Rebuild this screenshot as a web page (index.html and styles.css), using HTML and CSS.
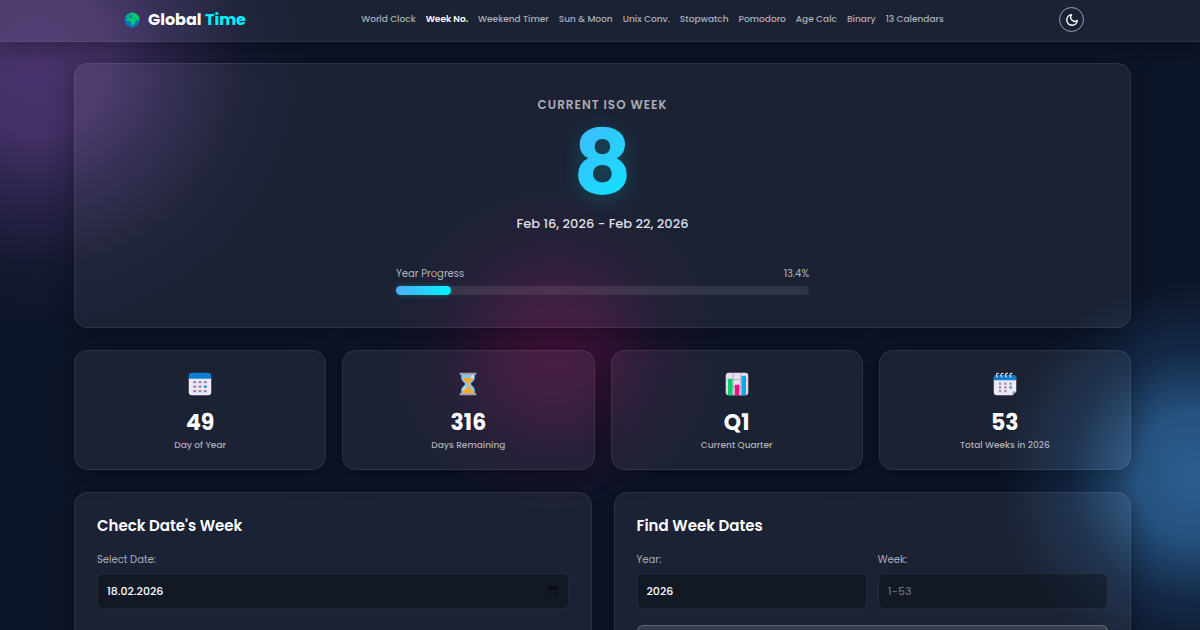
FILE: index.html
```html
<!DOCTYPE html>
<html lang="en">
<head>
<meta charset="utf-8">
<meta name="viewport" content="width=device-width, initial-scale=1">
<title>Week No. – Global Time</title>
<link rel="stylesheet" href="styles.css">
</head>
<body>
<header class="site-header">
  <a class="logo" href="#">
    <svg class="logo-icon" viewBox="0 0 32 32" aria-hidden="true">
      <circle cx="16" cy="16" r="15" fill="#0a74c2"/>
      <path fill="#08c96b" d="M9 4c4-3 10-3 14-1 5 2 7 6 8 11l-1 5-3-4-2 1-2-3-4-1-3 1-1-3 2-3zM3 10l3-4 5-1 1 3-2 2-5 1zM6 13l6-2 5 2 5 0 3 4-3 3-1 4-4 4-2-2-1-6-2-2-5 0-3-3z"/>
    </svg>
    <span>Global <span class="logo-accent">Time</span></span>
  </a>
  <nav class="nav" aria-label="Tools">
    <a href="#">World Clock</a>
    <a href="#" class="active" aria-current="page">Week No.</a>
    <a href="#">Weekend Timer</a>
    <a href="#">Sun &amp; Moon</a>
    <a href="#">Unix Conv.</a>
    <a href="#">Stopwatch</a>
    <a href="#">Pomodoro</a>
    <a href="#">Age Calc</a>
    <a href="#">Binary</a>
    <a href="#">13 Calendars</a>
  </nav>
  <button class="theme-toggle" type="button" aria-label="Toggle theme">
    <svg viewBox="0 0 24 24" fill="none" stroke="currentColor" stroke-width="2.4" stroke-linecap="round" stroke-linejoin="round" aria-hidden="true"><path d="M21 12.8A9 9 0 1 1 11.2 3 7 7 0 0 0 21 12.8z"/></svg>
  </button>
</header>

<main class="container">
  <section class="glass hero">
    <h1 class="hero-label">Current ISO Week</h1>
    <div class="week-number">8</div>
    <p class="week-range">Feb 16, 2026 - Feb 22, 2026</p>
    <div class="year-progress">
      <div class="progress-head"><span>Year Progress</span><span>13.4%</span></div>
      <div class="progress-track"><div class="progress-fill" style="width:13.4%"></div></div>
    </div>
  </section>

  <section class="stats">
    <article class="glass stat">
      <svg class="stat-icon" viewBox="0 0 32 32" aria-hidden="true">
        <path fill="#efe9f7" d="M1 8h30v19a4 4 0 0 1-4 4H5a4 4 0 0 1-4-4z"/>
        <path fill="#0a7fcd" d="M5 1h22a4 4 0 0 1 4 4v4H1V5a4 4 0 0 1 4-4z"/>
        <path fill="#978ba6" d="M7 12h4v3H7zM14 12h4v3h-4zM21 12h4v3h-4zM7 18h4v3H7zM14 18h4v3h-4zM7 24h4v3H7zM14 24h4v3h-4zM21 24h4v3h-4z"/>
        <path fill="#0a8ee0" d="M21 18h4v3h-4z"/>
      </svg>
      <div class="stat-value">49</div>
      <div class="stat-label">Day of Year</div>
    </article>
    <article class="glass stat">
      <svg class="stat-icon" viewBox="0 0 32 32" aria-hidden="true">
        <path fill="#83c8fa" d="M7 3h18v5c0 4-5 6-5 8s5 4 5 8v5H7v-5c0-4 5-6 5-8s-5-4-5-8z"/>
        <path fill="#c7e8ff" d="M20 4h4v4l-4 4zM9 23l4-4v3l-3 4z"/>
        <path fill="#ffaa2b" d="M9 8h14c-1 4-5 5-6 8v5c3 1 6 3 7 7H8c1-4 4-6 7-7v-5c-1-3-5-4-6-8z"/>
        <path fill="#a2a3aa" d="M5 1h22v3H5zM5 28h22v3H5z"/>
      </svg>
      <div class="stat-value">316</div>
      <div class="stat-label">Days Remaining</div>
    </article>
    <article class="glass stat">
      <svg class="stat-icon" viewBox="0 0 32 32" aria-hidden="true">
        <rect x="1" y="1" width="30" height="30" rx="4" fill="#eadff2"/>
        <path stroke="#bcaecb" stroke-width="1.4" d="M11 1v30M21 1v30M1 10h30M1 20h30"/>
        <path fill="#08cb6d" d="M4 9h6v22H5l-1-1z"/><path fill="#f40c83" d="M13 17h6v14h-6z"/><path fill="#12a5ed" d="M22 5h6v26h-6z"/>
      </svg>
      <div class="stat-value">Q1</div>
      <div class="stat-label">Current Quarter</div>
    </article>
    <article class="glass stat">
      <svg class="stat-icon" viewBox="0 0 32 32" aria-hidden="true">
        <path fill="#efe9f7" d="M1 9h30v17l-5 5H5a4 4 0 0 1-4-4z"/>
        <path fill="#aaa0b6" d="M26 31v-5h5z"/>
        <path fill="#0a7fcd" d="M4 4h24a3 3 0 0 1 3 3v4H1V7a3 3 0 0 1 3-3z"/>
        <g fill="none" stroke="#ddd7e7" stroke-width="1.7"><path d="M6 7c-3-3-1-6 2-5M12 7c-3-3-1-6 2-5M18 7c-3-3-1-6 2-5M24 7c-3-3-1-6 2-5"/></g>
        <path fill="#978ba6" d="M8 14h3v3H8zM15 14h3v3h-3zM22 14h3v3h-3zM8 19h3v3H8zM15 19h3v3h-3zM8 24h3v3H8zM15 24h3v3h-3z"/>
        <path fill="#0a8ee0" d="M22 19h3v3h-3z"/>
      </svg>
      <div class="stat-value">53</div>
      <div class="stat-label">Total Weeks in 2026</div>
    </article>
  </section>

  <section class="tools">
    <form class="glass tool">
      <h2>Check Date's Week</h2>
      <div class="field">
        <label for="date">Select Date:</label>
        <div class="date-box">
          <input id="date" type="text" value="18.02.2026">
          <button class="date-button" type="button" aria-label="Open calendar">
            <svg viewBox="0 0 12 12" aria-hidden="true"><path fill="#07090d" fill-rule="evenodd" d="M2 1h1V0h1v1h4V0h1v1h1a1 1 0 0 1 1 1v8a1 1 0 0 1-1 1H2a1 1 0 0 1-1-1V2a1 1 0 0 1 1-1zm0 3v6h8V4z"/></svg>
          </button>
        </div>
      </div>
    </form>
    <form class="glass tool">
      <h2>Find Week Dates</h2>
      <div class="field-row">
        <div class="field">
          <label for="year">Year:</label>
          <input id="year" type="text" inputmode="numeric" value="2026">
        </div>
        <div class="field">
          <label for="week">Week:</label>
          <input id="week" type="text" inputmode="numeric" placeholder="1-53">
        </div>
      </div>
      <button class="submit" type="button" aria-label="Find dates"></button>
    </form>
  </section>
</main>
</body>
</html>
```
FILE: styles.css
```css
* { box-sizing: border-box; }

html { scrollbar-width: none; }

body {
  margin: 0;
  min-height: 100vh;
  color: #fff;
  font-family: Poppins, Inter, "Open Sans", sans-serif;
  background:
    radial-gradient(circle at 35px 60px, rgb(119 75 162 / 56%) 0, rgb(115 73 158 / 52%) 75px, rgb(105 68 148 / 30%) 140px, rgb(100 65 145 / 9%) 205px, transparent 270px),
    radial-gradient(circle at 555px 350px, rgb(150 10 85 / 36%) 0, rgb(150 10 85 / 29%) 45px, rgb(150 10 85 / 10%) 105px, transparent 165px),
    radial-gradient(circle at calc(100% - 5px) 475px, rgb(64 145 215 / 58%) 0, rgb(60 140 210 / 52%) 60px, rgb(50 125 200 / 19%) 125px, transparent 195px);
  background-color: #0d1528;
}

a { color: inherit; text-decoration: none; }
h1, h2, p { margin: 0; }
button, input { font: inherit; color: inherit; }

.site-header {
  display: flex;
  align-items: center;
  justify-content: space-between;
  height: 42px;
  padding: 0 116px 2px 124px;
  background: rgb(255 255 255 / 6%);
  border-bottom: 1px solid rgb(255 255 255 / 7%);
  box-shadow: 0 6px 24px rgb(0 0 0 / 32%);
}

.logo {
  display: flex;
  align-items: center;
  gap: 8px;
  font-size: 16px;
  font-weight: 700;
}
.logo-icon { width: 16px; height: 16px; }
.logo-accent { color: #00f2fe; }

.nav {
  display: flex;
  gap: 10px;
  color: #adb0b8;
  font-size: 9px;
  font-weight: 500;
  white-space: nowrap;
}
.nav .active { color: #fff; font-weight: 600; }

.theme-toggle {
  display: grid;
  place-items: center;
  width: 25px;
  height: 25px;
  padding: 0;
  border: 1px solid #9a9fa9;
  border-radius: 50%;
  background: transparent;
}
.theme-toggle svg { width: 14px; height: 14px; }

.container {
  display: grid;
  gap: 22px;
  padding: 21px 69px 32px 74px;
}

.glass {
  background: rgb(255 255 255 / 6%);
  border: 1px solid rgb(255 255 255 / 8%);
  border-radius: 14px;
  box-shadow: 0 6px 24px rgb(0 0 0 / 32%);
}

.hero {
  display: flex;
  flex-direction: column;
  align-items: center;
  padding: 33px 32px 32px;
}
.hero-label {
  color: #a9adb5;
  font-size: 12px;
  line-height: 16px;
  font-weight: 600;
  letter-spacing: 1px;
  text-transform: uppercase;
}
.week-number {
  margin-top: 1px;
  padding: 0 32px;
  font-size: 90px;
  line-height: 98px;
  font-weight: 700;
  background: linear-gradient(135deg, #4facfe, #00f2fe);
  background-clip: text;
  -webkit-background-clip: text;
  color: transparent;
  filter: drop-shadow(0 4px 10px rgb(0 242 254 / 20%));
}
.week-range {
  margin-top: 2px;
  color: #dddfe4;
  font-size: 13px;
  line-height: 20px;
  font-weight: 500;
}
.year-progress {
  width: 100%;
  max-width: 413px;
  margin-top: 32px;
}
.progress-head {
  display: flex;
  justify-content: space-between;
  color: #b2b5bc;
  font-size: 10px;
  line-height: 16px;
}
.progress-track {
  height: 9px;
  margin-top: 4px;
  border-radius: 5px;
  background: rgb(255 255 255 / 9%);
}
.progress-fill {
  height: 100%;
  border-radius: 5px;
  background: linear-gradient(90deg, #4facfe, #00f2fe);
  box-shadow: 0 0 5px rgb(0 242 254 / 30%);
}

.stats {
  display: grid;
  grid-template-columns: repeat(4, 1fr);
  gap: 16px;
}
.stat {
  display: flex;
  flex-direction: column;
  align-items: center;
  padding: 21px 16px 15px;
}
.stat-icon { width: 24px; height: 24px; }
.stat-value {
  margin-top: 13px;
  font-size: 22px;
  line-height: 28px;
  font-weight: 700;
}
.stat-label {
  color: #adb0b8;
  font-size: 9px;
  line-height: 17px;
  font-weight: 500;
}

.tools {
  display: grid;
  grid-template-columns: repeat(2, 1fr);
  gap: 22px;
}
.tool {
  min-height: 190px;
  padding: 22px;
}
.tool h2 {
  font-size: 15px;
  line-height: 22px;
  font-weight: 600;
}
.field-row {
  display: grid;
  grid-template-columns: repeat(2, 1fr);
  gap: 11px;
}
.field {
  display: flex;
  flex-direction: column;
  gap: 5px;
  margin-top: 15px;
}
.field label {
  color: #a9adb5;
  font-size: 10px;
  line-height: 16px;
}
.field input {
  width: 100%;
  height: 36px;
  padding: 0 9px;
  border: 1px solid rgb(255 255 255 / 7%);
  border-radius: 6px;
  background: rgb(0 0 0 / 28%);
  font-size: 11px;
  font-weight: 500;
}
.field input::placeholder { color: #666b75; }
.date-box { position: relative; }
.date-button {
  position: absolute;
  top: 50%;
  right: 11px;
  translate: 0 -50%;
  display: grid;
  padding: 0;
  border: 0;
  background: none;
}
.date-button svg { width: 11px; height: 11px; }
.submit {
  width: 100%;
  height: 38px;
  margin-top: 16px;
  border: 1px solid rgb(255 255 255 / 20%);
  border-radius: 6px;
  background: rgb(255 255 255 / 12%);
}
```
